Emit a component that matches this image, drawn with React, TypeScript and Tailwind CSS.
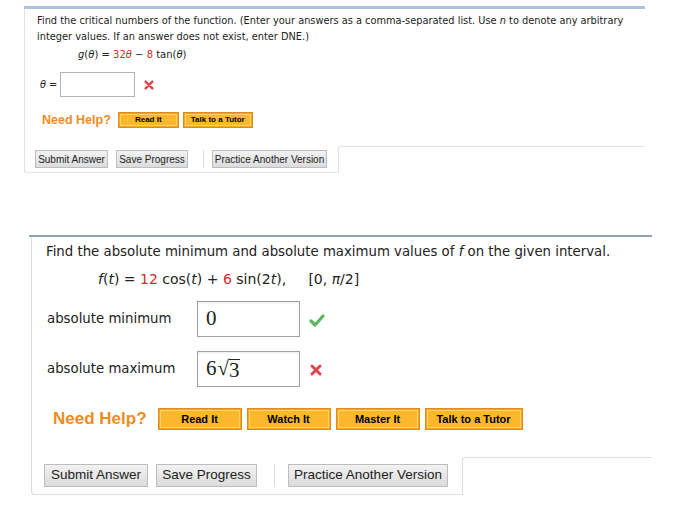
import React from 'react'

const verdana = { fontFamily: '"DejaVu Sans", Verdana, sans-serif' }

function RedX({ size = 11 }: { size?: number }) {
  return (
    <svg width={size} height={size} viewBox="0 0 12 12">
      <path d="M2 2 L10 10 M10 2 L2 10" stroke="#e0474c" strokeWidth="3" strokeLinecap="round" />
    </svg>
  )
}

function Check() {
  return (
    <svg width="16" height="13" viewBox="0 0 16 13">
      <path d="M2 7 L6 11 L14 2" fill="none" stroke="#5cb85c" strokeWidth="3.2" strokeLinecap="round" strokeLinejoin="round" />
    </svg>
  )
}

function OrangeBtn({ label, className }: { label: string; className: string }) {
  return (
    <div className={`flex items-center justify-center bg-[#f5a623] border border-[#e08a1e] p-[1px] ${className}`}>
      <div className="w-full h-full flex items-center justify-center bg-[#fbb82d] border border-[#ffd46a] font-['Liberation_Sans',Arial,sans-serif] font-bold text-black">
        {label}
      </div>
    </div>
  )
}

function GrayBtn({ label, className }: { label: string; className: string }) {
  return (
    <div className={`flex items-center justify-center bg-gradient-to-b from-[#f2f2f2] to-[#dcdcdc] border border-[#bdbdbd] text-[#222] font-['Liberation_Sans',Arial,sans-serif] ${className}`}>
      {label}
    </div>
  )
}

export default function App() {
  return (
    <div className="w-[700px] h-[525px] bg-white overflow-hidden">
      {/* first question, shown smaller */}
      <div className="ml-[24px] mt-[6px] w-[621px] border-t-[3px] border-[#aac3de]">
        <div className="border-l border-[#e2e2e2] pl-[12px] pt-[4px] pb-[8px] text-[9.8px] leading-[16px] text-[#222]" style={verdana}>
          <p className="whitespace-nowrap">
            Find the critical numbers of the function. (Enter your answers as a comma-separated list. Use <i>n</i> to denote any arbitrary
          </p>
          <p>integer values. If an answer does not exist, enter DNE.)</p>
          <p className="pl-[41px] pt-[2px] text-[10px]">
            <i>g</i>(<i>θ</i>) = <span className="text-[#d62b2b]">32</span><i className="text-[#d62b2b]">θ</i> − <span className="text-[#d62b2b]">8</span> tan(<i>θ</i>)
          </p>
          <div className="flex items-center mt-[9px] pl-[3px]">
            <span><i>θ</i> =</span>
            <div className="ml-[3px] w-[75px] h-[25px] border border-[#b5b5b5] bg-white" />
            <span className="ml-[9px]"><RedX size={10} /></span>
          </div>
          <div className="flex items-center mt-[15px] pl-[5px]">
            <span className="font-['Liberation_Sans',Arial,sans-serif] font-bold text-[12.5px] text-[#ee8c22]">Need Help?</span>
            <OrangeBtn label="Read It" className="ml-[7px] w-[61px] h-[16px] text-[8px]" />
            <OrangeBtn label="Talk to a Tutor" className="ml-[4px] w-[70px] h-[16px] text-[8px]" />
          </div>
        </div>
        <div className="flex h-[37px]">
          <div className="w-[314px] border-l border-b border-[#e2e2e2] rounded-bl-[3px] flex items-end pl-[10px] pb-[4px]">
            <GrayBtn label="Submit Answer" className="w-[73px] h-[18px] text-[10px]" />
            <GrayBtn label="Save Progress" className="ml-[8px] w-[72px] h-[18px] text-[10px]" />
            <div className="ml-[15px] w-px h-[18px] bg-[#dcdcdc]" />
            <GrayBtn label="Practice Another Version" className="ml-[8px] w-[115px] h-[18px] text-[10px]" />
          </div>
          <div className="flex-1 mt-[10px] border-t border-l border-[#e2e2e2] rounded-tl-[3px]" />
        </div>
      </div>

      {/* second question */}
      <div className="ml-[29px] mt-[62px] w-[623px] border-t-2 border-[#8ea4bd]">
        <div className="ml-[2px] border-l border-[#dcdcdc] pl-[14px] pt-[6px] pb-[6px] text-[13.3px] text-[#222]" style={verdana}>
          <p className="leading-[18px]">
            Find the absolute minimum and absolute maximum values of <i>f</i> on the given interval.
          </p>
          <p className="pl-[52px] mt-[9px] leading-[18px] text-[14px]">
            <i>f</i>(<i>t</i>) = <span className="text-[#d62b2b]">12</span> cos(<i>t</i>) + <span className="text-[#d62b2b]">6</span> sin(2<i>t</i>),{'\u00a0\u00a0\u00a0\u00a0\u00a0'}[0, <i>π</i>/2]
          </p>
          <div className="flex items-center mt-[13px] pl-[1px]">
            <span className="w-[150px]">absolute minimum</span>
            <div className="w-[103px] h-[36px] border border-[#a0a0a0] shadow-[inset_0_1px_2px_rgba(0,0,0,0.08)] pl-[8px] flex items-center font-['Liberation_Serif','Times_New_Roman',serif] text-[21px] text-[#222]">0</div>
            <span className="ml-[9px] mt-[2px]"><Check /></span>
          </div>
          <div className="flex items-center mt-[14px] pl-[1px]">
            <span className="w-[150px]">absolute maximum</span>
            <div className="w-[103px] h-[36px] border border-[#a0a0a0] shadow-[inset_0_1px_2px_rgba(0,0,0,0.08)] pl-[8px] flex items-center font-['Liberation_Serif','Times_New_Roman',serif] text-[21px] text-[#222]">
              <span>6</span>
              <span className="ml-[1px]">√</span>
              <span className="border-t border-[#222] leading-[20px]">3</span>
            </div>
            <span className="ml-[10px] mt-[2px]"><RedX size={12} /></span>
          </div>
          <div className="flex items-center mt-[19px] pl-[7px]">
            <span className="font-['Liberation_Sans',Arial,sans-serif] font-bold text-[17px] text-[#ee8c22]">Need Help?</span>
            <OrangeBtn label="Read It" className="ml-[11px] w-[84px] h-[22px] text-[11px]" />
            <OrangeBtn label="Watch It" className="ml-[5px] w-[84px] h-[22px] text-[11px]" />
            <OrangeBtn label="Master It" className="ml-[5px] w-[84px] h-[22px] text-[11px]" />
            <OrangeBtn label="Talk to a Tutor" className="ml-[5px] w-[98px] h-[22px] text-[11px]" />
          </div>
        </div>
        <div className="flex h-[57px] ml-[2px]">
          <div className="w-[431px] border-l border-b border-[#dcdcdc] rounded-bl-[4px] flex items-end pl-[12px] pb-[7px]">
            <GrayBtn label="Submit Answer" className="w-[104px] h-[23px] text-[13.5px]" />
            <GrayBtn label="Save Progress" className="ml-[8px] w-[101px] h-[23px] text-[13.5px]" />
            <div className="ml-[17px] w-px h-[23px] bg-[#dcdcdc]" />
            <GrayBtn label="Practice Another Version" className="ml-[13px] w-[160px] h-[23px] text-[13.5px]" />
          </div>
          <div className="flex-1 mt-[19px] border-t border-l border-[#dcdcdc] rounded-tl-[4px]" />
        </div>
      </div>
    </div>
  )
}
